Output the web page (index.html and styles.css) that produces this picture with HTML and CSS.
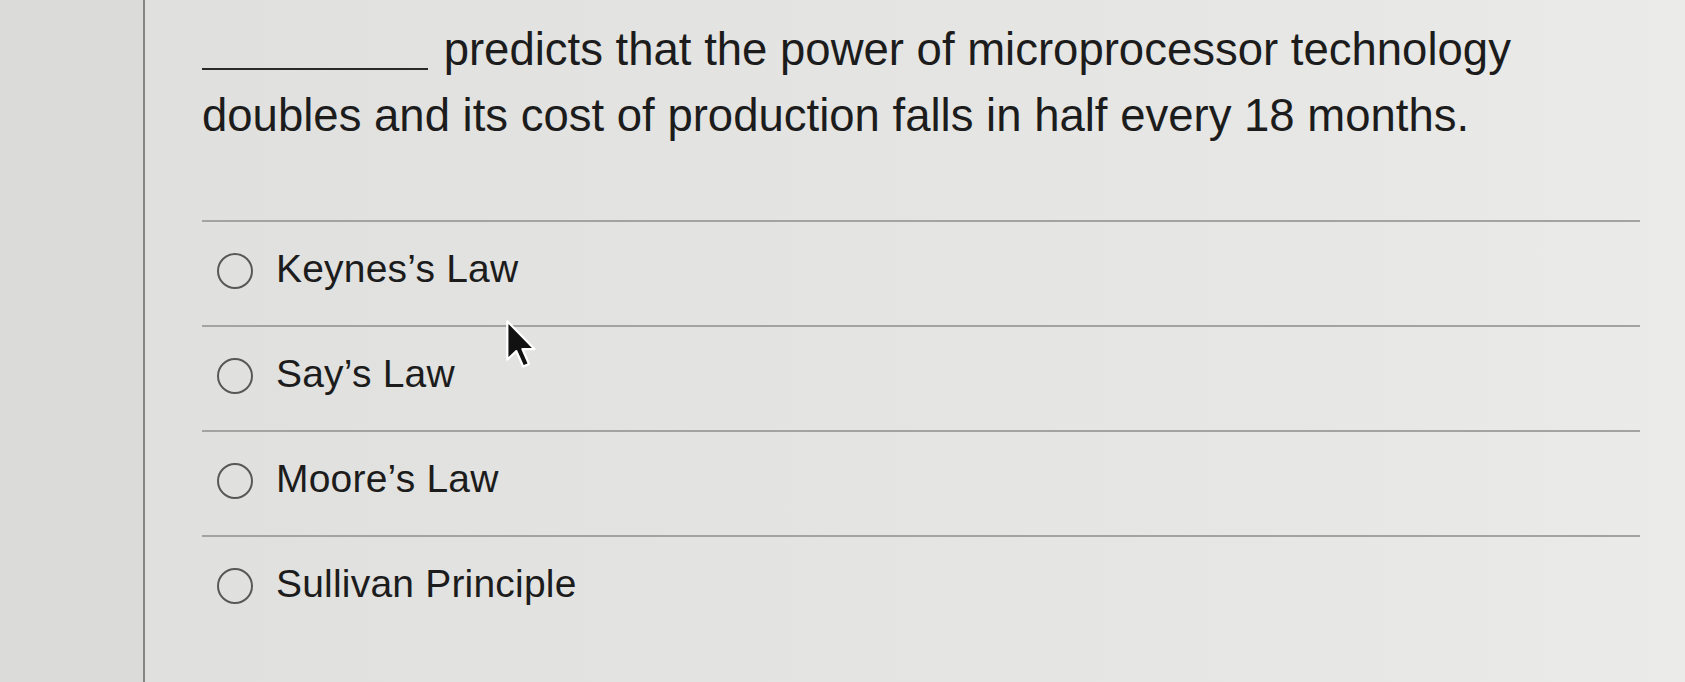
FILE: index.html
```html
<!DOCTYPE html>
<html lang="en">
<head>
<meta charset="utf-8">
<title>Quiz question</title>
<link rel="stylesheet" href="styles.css">
</head>
<body>
<div class="screen">
  <aside class="side"></aside>
  <main class="content">
    <p class="question"><span class="blank"></span> predicts that the power of microprocessor technology<br>doubles and its cost of production falls in half every 18 months.</p>
    <ul class="options">
      <li class="option"><span class="radio"></span><span class="label">Keynes’s Law</span></li>
      <li class="option"><span class="radio"></span><span class="label">Say’s Law</span></li>
      <li class="option"><span class="radio"></span><span class="label">Moore’s Law</span></li>
      <li class="option"><span class="radio"></span><span class="label">Sullivan Principle</span></li>
    </ul>
  </main>
  <svg class="cursor" width="34" height="52" viewBox="0 0 15 23" aria-hidden="true">
    <path d="M1 1 L1 18 L5 14.2 L8 21 L10.6 19.9 L7.7 13.3 L13 13.3 Z" fill="#111" stroke="#fff" stroke-width="1" stroke-linejoin="round"/>
  </svg>
</div>
</body>
</html>
```
FILE: styles.css
```css
html, body {
  margin: 0;
  padding: 0;
}

body {
  width: 1685px;
  height: 682px;
  overflow: hidden;
  font-family: "Liberation Sans", Arial, Helvetica, sans-serif;
  color: #1f1f1f;
}

.screen {
  position: relative;
  display: flex;
  width: 1685px;
  height: 682px;
  background: linear-gradient(90deg, #dfdfdd 0%, #e3e3e1 40%, #e7e7e5 80%, #ebebe9 100%);
}

.side {
  width: 143px;
  flex: none;
  background: #dbdbd9;
  border-right: 2px solid #858585;
}

.content {
  flex: 1;
  padding: 17px 45px 0 57px;
}

.question {
  margin: 0 0 71px;
  font-size: 45.5px;
  line-height: 66px;
  color: #1c1c1c;
}

.blank {
  display: inline-block;
  width: 226px;
  height: 0;
  margin-right: 3px;
  border-bottom: 2px solid #2a2a2a;
  vertical-align: -5px;
}

.options {
  list-style: none;
  margin: 0;
  padding: 0;
}

.option {
  display: flex;
  align-items: center;
  height: 103px;
  border-top: 2px solid #a3a3a3;
}

.radio {
  width: 32px;
  height: 32px;
  margin: 0 23px 5px 15px;
  border: 2px solid #585858;
  border-radius: 50%;
  flex: none;
}

.label {
  font-size: 39px;
  letter-spacing: 0.2px;
  line-height: 44px;
  margin-bottom: 9px;
  color: #1c1c1c;
}

.cursor {
  position: absolute;
  left: 505px;
  top: 319px;
}
```
